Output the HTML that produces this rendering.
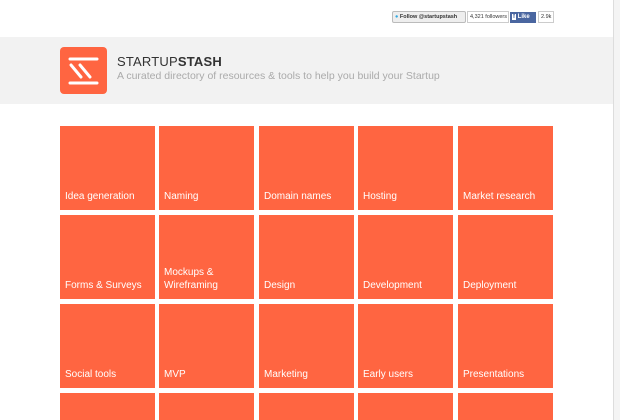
<!DOCTYPE html>
<html style="width:620px;height:420px;overflow:hidden"><head><style>
*{margin:0;padding:0;box-sizing:border-box}
body{width:620px;height:420px;overflow:hidden;background:#fff;font-family:"Liberation Sans",sans-serif;position:relative}
.sb{position:absolute;right:0;top:0;width:7px;height:420px;background:#f4f4f4;border-left:1px solid #ddd}
.hdr{position:absolute;left:0;top:37px;width:613px;height:67px;background:#f2f2f2}
.logo{position:absolute;left:60px;top:47px;width:47px;height:47px;background:#ff6541;border-radius:4px}
.t1{position:absolute;left:117px;top:54px;font-size:13px;color:#333;letter-spacing:0.2px}
.t2{position:absolute;left:117px;top:70px;font-size:10.5px;color:#aaa}
.tile{position:absolute;width:95px;height:84px;background:#ff6541;color:#fff;font-size:10px;padding:0 5px 7px 5px;display:flex;align-items:flex-end;line-height:13px}
.tw{position:absolute;top:11px;left:392px;width:74px;height:12px;border:1px solid #bbb;border-radius:2px;background:#eee;font-size:5.5px;font-weight:bold;color:#333;padding:1px 2px 0 2px;line-height:9px;white-space:nowrap;overflow:hidden}
.bx{position:absolute;top:11px;height:12px;border:1px solid #ccc;background:#fff;font-size:5.5px;color:#333;line-height:10px;padding:0 2px;white-space:nowrap}
.fb{position:absolute;top:12px;left:510px;height:11px;width:26px;background:#4a66a0;color:#fff;font-size:6px;font-weight:bold;line-height:11px;padding-left:2px}
</style></head><body>
<div class="sb"></div>
<div class="tw"><span style="color:#2ea7e0">&#9679;</span> Follow @startupstash</div>
<div class="bx" style="left:467px;width:42px">4,321 followers</div>
<div class="fb"><span style="background:#fff;color:#4a66a0;padding:0 1px">f</span> Like</div>
<div class="bx" style="left:538px">2.9k</div>
<div class="hdr"></div>
<div class="logo">
<svg width="47" height="47" viewBox="0 0 47 47"><g stroke="#fff" stroke-width="3" stroke-linecap="round" fill="none"><line x1="10" y1="12" x2="37" y2="12"/><line x1="10" y1="36" x2="37" y2="36"/><line x1="11" y1="18" x2="21" y2="30"/><line x1="20" y1="18" x2="30" y2="30"/></g></svg>
</div>
<div class="t1">STARTUP<b>STASH</b></div>
<div class="t2">A curated directory of resources &amp; tools to help you build your Startup</div>
<div class="tile" style="left:60px;top:126px">Idea generation</div>
<div class="tile" style="left:159px;top:126px">Naming</div>
<div class="tile" style="left:259px;top:126px">Domain names</div>
<div class="tile" style="left:358px;top:126px">Hosting</div>
<div class="tile" style="left:458px;top:126px">Market research</div>
<div class="tile" style="left:60px;top:215px">Forms &amp; Surveys</div>
<div class="tile" style="left:159px;top:215px">Mockups &amp;<br>Wireframing</div>
<div class="tile" style="left:259px;top:215px">Design</div>
<div class="tile" style="left:358px;top:215px">Development</div>
<div class="tile" style="left:458px;top:215px">Deployment</div>
<div class="tile" style="left:60px;top:304px">Social tools</div>
<div class="tile" style="left:159px;top:304px">MVP</div>
<div class="tile" style="left:259px;top:304px">Marketing</div>
<div class="tile" style="left:358px;top:304px">Early users</div>
<div class="tile" style="left:458px;top:304px">Presentations</div>
<div class="tile" style="left:60px;top:393px;height:27px"></div>
<div class="tile" style="left:159px;top:393px;height:27px"></div>
<div class="tile" style="left:259px;top:393px;height:27px"></div>
<div class="tile" style="left:358px;top:393px;height:27px"></div>
<div class="tile" style="left:458px;top:393px;height:27px"></div>
</body></html>
